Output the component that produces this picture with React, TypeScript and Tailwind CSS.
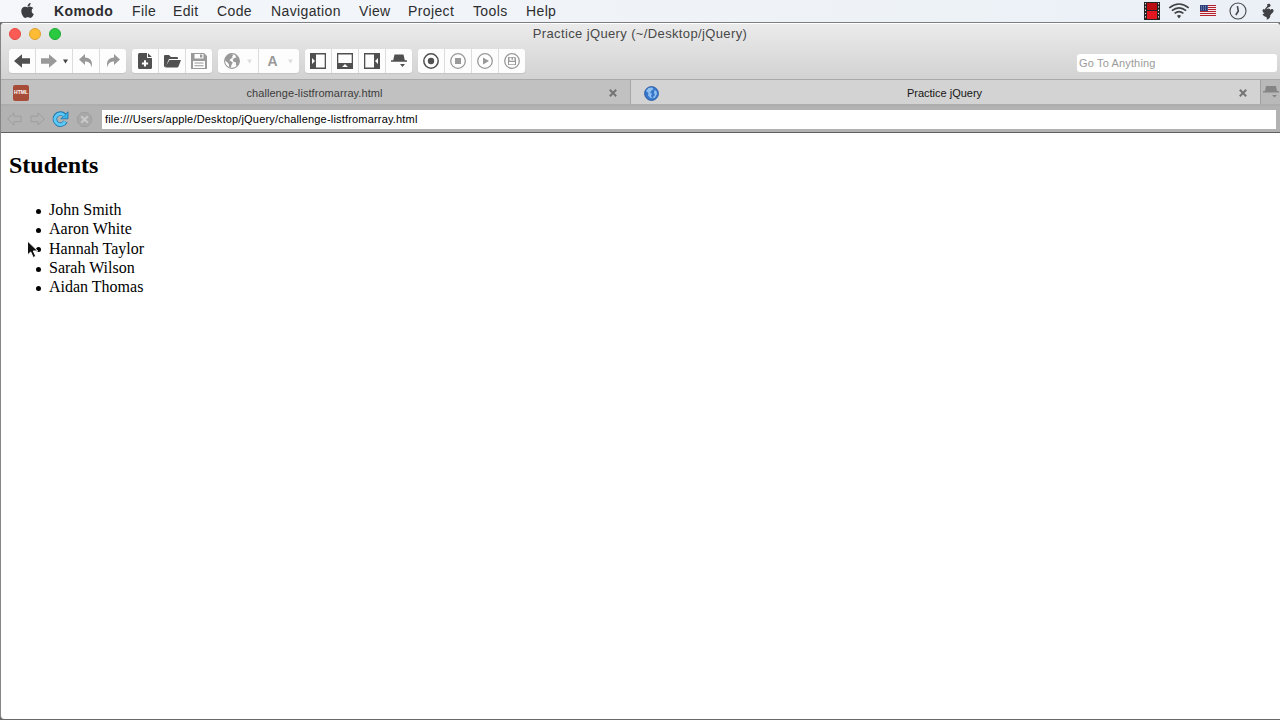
import type { ReactNode } from "react";
import { FaApple } from "react-icons/fa";

const menus = [
  { label: "File", className: "w-[41px]" },
  { label: "Edit", className: "w-[44px]" },
  { label: "Code", className: "w-[54px]" },
  { label: "Navigation", className: "w-[88px]" },
  { label: "View", className: "w-[49px]" },
  { label: "Project", className: "w-[65px]" },
  { label: "Tools", className: "w-[53px]" },
  { label: "Help", className: "w-[40px]" },
];

const students = [
  "John Smith",
  "Aaron White",
  "Hannah Taylor",
  "Sarah Wilson",
  "Aidan Thomas",
];

function Group({ children }: { children: ReactNode }) {
  return (
    <div className="flex h-6 divide-x divide-[#dcdcdc] overflow-hidden rounded-[3px] bg-[#fdfdfd] shadow-[0_1px_1px_rgba(0,0,0,0.08)]">
      {children}
    </div>
  );
}

function Tool({ children, className = "w-[27px]", color = "text-[#505050]" }: { children: ReactNode; className?: string; color?: string }) {
  return (
    <button className={`flex h-6 shrink-0 items-center justify-center ${className} ${color}`}>
      {children}
    </button>
  );
}

function Icon({ children, width = 16 }: { children: ReactNode; width?: number }) {
  return (
    <svg width={width} height="16" viewBox={`0 0 ${width} 16`} fill="currentColor" className="shrink-0">
      {children}
    </svg>
  );
}

function MenuBar() {
  return (
    <header className="flex h-[23px] items-center border-b border-[#7c7e82] bg-linear-to-r from-[#f5f7fa] to-[#eaf0f6] text-[14px] tracking-[0.37px] text-[#2c2d2f]">
      <FaApple className="mb-[2px] ml-[20px] h-[17px] w-[15px] shrink-0 text-[#3c3e41]" />
      <span className="ml-[19px] w-[78px] font-bold tracking-[0.4px]">Komodo</span>
      <nav className="flex">
        {menus.map((m) => (
          <span key={m.label} className={m.className}>
            {m.label}
          </span>
        ))}
      </nav>
      <div className="ml-auto flex shrink-0 items-center">
        {/* film strip */}
        <svg width="16" height="18" viewBox="0 0 16 18" className="mr-[8px]">
          <path fill="#252222" d="M0 0h16v18H0z" />
          <path fill="#b90d12" d="M3 1h10v7H3z" />
          <path fill="#e3171f" d="M3 9h10v8H3z" />
          <path stroke="#f3e7e8" strokeDasharray="1.3 2" d="M1.5 1v16M14.5 1v16" />
        </svg>
        {/* wifi */}
        <svg width="22" height="16" viewBox="0 0 22 16" fill="none" stroke="#3f4144" strokeWidth="1.6" className="mr-[10px]">
          <path d="M1.300 4.800q9.700-7.500 19.400 0M3.900 7.700q7.100-5.600 14.200 0M6.600 10.400q4.400-3.500 8.800 0" />
          <path fill="#3f4144" stroke="none" d="M8.900 12.800q2.100-1.500 4.200 0L11 15.400z" />
        </svg>
        {/* flag */}
        <svg width="16" height="11" viewBox="0 0 16 11" className="mr-[13px] mb-[2px]">
          <path fill="#f3e9ec" d="M0 0h16v11H0z" />
          <path fill="#b3202e" d="M0 0h16v1H0zM0 2h16v1H0zM0 4h16v1H0zM0 6h16v1H0zM0 8h16v1H0zM0 10h16v1H0z" />
          <path fill="#293b79" d="M0 0h8v6H0z" />
          <path stroke="#ccd2e8" strokeDasharray="0.8 1.2" strokeWidth="0.7" d="M1 1.300h6.500M1 3h6.500M1 4.700h6.500" />
        </svg>
        {/* clock */}
        <svg width="18" height="18" viewBox="0 0 18 18" fill="none" stroke="#45474a" strokeWidth="1.100" className="mr-[15px]">
          <circle cx="9" cy="9" r="8" />
          <path strokeWidth="1.600" d="M8.400 4.200L9.300 9 6.800 13" />
        </svg>
        {/* ornament */}
        <svg width="12" height="17" viewBox="0 0 12 17" fill="#3f4144" className="mr-[6px]">
          <path d="M5 1.500C6.500 0 9 .8 8.500 2.800 8 4.400 5.500 4 4.600 6.200c2-1.200 3.400-.4 3.600.8 1-1.600 3.200-1.300 3.400.6.2 2-2.200 3-3.400 4.700.5 1.900-1.200 3.900-3.600 4.300 0-1 .5-1.400.2-2.200C3.500 13.500 1 13.200.4 11c1 0 1.700-.2 2-1C1 9.500 0 8 .9 6.600c.7-1 1.600-.7 2 .1C2.800 4.500 6.500 3.500 5 1.500z" />
        </svg>
      </div>
    </header>
  );
}

function Toolbar() {
  return (
    <div className="flex h-[33px] items-start pt-[3px] pr-[3px] pl-[8px]">
      <Group>
        <Tool className="w-[27px]">
          <Icon><path d="M0 8l8-6.700v4h8v5.400H8v4z" /></Icon>
        </Tool>
        <Tool className="w-[37px] gap-[6px]" color="text-[#999]">
          <Icon><path d="M16 8L8 1.300v4H0v5.400h8v4z" /></Icon>
          <svg width="5" height="5" viewBox="0 0 5 5"><path fill="#444" d="M0 .5h5l-2.500 4z" /></svg>
        </Tool>
        <Tool color="text-[#999]">
          <Icon><path d="M1 6.500L7 1v3.500c5 .2 8.500 3.500 6.300 10C13 10.500 11 8.700 7 8.600V12z" /></Icon>
        </Tool>
        <Tool className="w-[26px]" color="text-[#999]">
          <Icon><path d="M15 6.500L9 1v3.500c-5 .2-8.500 3.500-6.300 10C3 10.500 5 8.700 9 8.600V12z" /></Icon>
        </Tool>
      </Group>
      <div className="w-[6px]" />
      <Group>
        <Tool>
          <Icon>
            <path d="M1 1.500Q1 0 2.500 0H10v5h5v9.500q0 1.500-1.500 1.500h-11Q1 16 1 14.500zM11 .3L14.800 4H11z" />
            <path stroke="#fff" strokeWidth="2" d="M8 7.300v6.200M4.900 10.400h6.200" />
          </Icon>
        </Tool>
        <Tool>
          <Icon width={17}>
            <path d="M0 14V3q0-1 1-1h4l2 2h6q1 0 1 1v1H5L2 13zM5.500 7H17l-2.500 6.500q-.3 1-1.500 1H1z" />
          </Icon>
        </Tool>
        <Tool className="w-[26px]" color="text-[#999]">
          <Icon>
            <path fillRule="evenodd" d="M0 0h13l3 3v13H0zM3.500 1v4.500h9V1zM2 8v7h12V8z" />
            <path d="M9 1.500h2.300v3H9zM3.500 9.500h9v1h-9zM3.500 12.300h9v1h-9z" />
          </Icon>
        </Tool>
      </Group>
      <div className="w-[6px]" />
      <Group>
        <Tool className="w-[41px] gap-[7px]" color="text-[#999]">
          <Icon>
            <circle cx="8" cy="8" r="7.400" fill="none" stroke="currentColor" strokeWidth="1.100" />
            <path d="M1.500 5L4 2l3-1.300L9.500 2 8 3.200l.8 1.300L6.500 6 5.300 7.200 7 8.300l1.800 1.200L7.500 12l-.8 2.700-1.500-1L4.800 11 3 9 1 7.500zM11 2l3 2 1.500 4-1 3.500-1.700 1.500-1-1.200.3-2.300-2.600-.7-.8-2.300L10.500 5l1.800-.5z" />
          </Icon>
          <svg width="5" height="5" viewBox="0 0 5 5"><path fill="#ddd" d="M0 .5h5l-2.500 4z" /></svg>
        </Tool>
        <Tool className="w-[40px] gap-[10px] pl-[2px]" color="text-[#999]">
          <span className="text-[14px] leading-none font-bold">A</span>
          <svg width="5" height="5" viewBox="0 0 5 5"><path fill="#ddd" d="M0 .5h5l-2.500 4z" /></svg>
        </Tool>
      </Group>
      <div className="w-[6px]" />
      <Group>
        <Tool>
          <Icon><path fillRule="evenodd" d="M0 0h16v16H0zM6 1.500v13h8.700v-13zM2 5v6l3-3z" /></Icon>
        </Tool>
        <Tool>
          <Icon><path fillRule="evenodd" d="M0 0h16v16H0zM1.300 1.500v8.500h13.400V1.500zM5 14h6l-3-3z" /></Icon>
        </Tool>
        <Tool>
          <Icon><path fillRule="evenodd" d="M0 0h16v16H0zM1.300 1.500v13H10v-13zM14 5v6l-3-3z" /></Icon>
        </Tool>
        <Tool className="w-[26px]">
          <Icon><path d="M3.500 1.500h9l1.300 5.700H16v1.600H0V7.200h2.200zM9 11h5l-2.500 3z" /></Icon>
        </Tool>
      </Group>
      <div className="w-[6px]" />
      <Group>
        <Tool>
          <Icon>
            <circle cx="8" cy="8" r="7.200" fill="none" stroke="currentColor" strokeWidth="1.500" />
            <circle cx="8" cy="8" r="3.200" />
          </Icon>
        </Tool>
        <Tool color="text-[#999]">
          <Icon>
            <circle cx="8" cy="8" r="7.300" fill="none" stroke="currentColor" strokeWidth="1.300" />
            <path d="M5 5h6v6H5z" />
          </Icon>
        </Tool>
        <Tool color="text-[#999]">
          <Icon>
            <circle cx="8" cy="8" r="7.300" fill="none" stroke="currentColor" strokeWidth="1.300" />
            <path d="M6 4.500L12 8l-6 3.500z" />
          </Icon>
        </Tool>
        <Tool className="w-[26px]" color="text-[#999]">
          <Icon>
            <circle cx="8" cy="8" r="7.300" fill="none" stroke="currentColor" strokeWidth="1.300" />
            <path fillRule="evenodd" d="M4 4h7l1 1v7H4zM5.500 4.800v3h5v-3zM5 9v2.200h6V9z" />
            <path d="M7.500 4.500H9v2.300H7.500z" />
          </Icon>
        </Tool>
      </Group>
      <div className="mt-[5px] ml-auto flex h-[18px] w-[200px] items-center rounded-[3px] bg-white pl-[2px] text-[11px] tracking-[0.15px] text-[#9a9a9a]">
        Go To Anything
      </div>
    </div>
  );
}

function CloseIcon() {
  return (
    <svg width="8" height="8" viewBox="0 0 8 8" stroke="#747474" strokeWidth="2" className="mt-[2px]">
      <path d="M.8.800l6.400 6.400M7.200.800L.8 7.200" />
    </svg>
  );
}

function Tabs() {
  return (
    <div className="flex h-[27px] border-t border-[#aaa] border-b-2 border-b-[#adadad] text-[11px] text-[#3c3c3c]">
      <div className="flex w-[630px] items-center border-r border-[#a6a6a6] bg-[#c1c1c1] pr-[13px] pl-[12px]">
        <span className="mt-[2px] flex h-4 w-4 items-center justify-center rounded-[2px] bg-[#a84c3a] text-[5px] font-bold text-white">HTML</span>
        <span className="flex-1 pt-[2px] pr-[9px] text-center tracking-[0.06px]">challenge-listfromarray.html</span>
        <CloseIcon />
      </div>
      <div className="flex w-[629px] items-center bg-[#d3d3d3] pr-[13px] pl-[13px]">
        <svg width="15" height="15" viewBox="0 0 15 15" className="mt-[2px]">
          <circle cx="7.500" cy="7.500" r="6.900" fill="#3677cb" stroke="#315fa9" />
          <path fill="#8fc0f0" d="M2 5l2.500-3L8 1.500 9.500 3 7.500 4.500 6 7l2 .5L7 10l1.500 2.500L6.500 12 4 9.500 4.500 7zM10.500 4l2 1 .5 3-2 3.500-1.500 1-.5-1.500L11 9l-1-2z" />
        </svg>
        <span className="flex-1 pt-[2px] pr-[9px] text-center text-[#151515]">Practice jQuery</span>
        <CloseIcon />
      </div>
      <div className="flex flex-1 items-center justify-center border-l border-[#a0a0a0] bg-[#b9b9b9]">
        <svg width="16" height="14" viewBox="0 0 16 14" fill="#858585">
          <path d="M3 1h10l1 5h2v1.500H0V6h2zM9 10h5l-2.500 2.500z" />
        </svg>
      </div>
    </div>
  );
}

function AddressBar() {
  return (
    <div className="flex h-[27px] items-center border-b border-[#606060] bg-[#b2b2b2] pr-[4px] pl-[6px]">
      <svg width="15" height="14" viewBox="0 0 15 14" fill="#b2b2b2" stroke="#9d9d9d">
        <path d="M.7 7L7 .8v3.400h7v5.600H7v3.400z" />
      </svg>
      <svg width="15" height="14" viewBox="0 0 15 14" fill="#b2b2b2" stroke="#9d9d9d" className="ml-[8px]">
        <path d="M14.300 7L8 .8v3.400H1v5.600h7v3.400z" />
      </svg>
      <svg width="17" height="17" viewBox="0 0 17 17" fill="none" className="ml-[7px]">
        <path stroke="#1b72a8" strokeWidth="4.500" d="M13.500 10.500a5.600 5.600 0 1 1-1-6.300" />
        <path fill="#37b0e8" stroke="#1b72a8" strokeWidth=".8" d="M16 .8v7H8.800z" />
        <path stroke="#5bc8f5" strokeWidth="3" d="M13.200 10.500a5.400 5.400 0 1 1-1-6" />
      </svg>
      <svg width="15" height="15" viewBox="0 0 15 15" className="ml-[8px]">
        <path fill="#a8a8a8" stroke="#a0a0a0" d="M4.500.5h6l4 4v6l-4 4h-6l-4-4v-6z" />
        <path stroke="#c8c8c8" strokeWidth="2.200" d="M4.200 4.200l6.600 6.600M10.800 4.200l-6.600 6.600" />
      </svg>
      <div className="ml-[10px] flex h-[19px] flex-1 items-center bg-white pl-[3px] text-[11px] tracking-[0.18px] text-black">
        file:///Users/apple/Desktop/jQuery/challenge-listfromarray.html
      </div>
    </div>
  );
}

export default function App() {
  return (
    <div className="relative flex h-[720px] w-[1280px] flex-col overflow-hidden bg-[#686868] font-['Liberation_Sans',Arial,sans-serif]">
      <MenuBar />
      <div className="flex h-[696px] flex-col overflow-hidden rounded-t-[4px] rounded-bl-[4px] border-l border-[#858585] bg-white">
        <div className="h-[56px] shrink-0 border-t border-white bg-linear-to-b from-[#ebebeb] to-[#d2d2d2]">
          <div className="flex h-[22px] items-center pb-[2px]">
            <div className="flex w-[200px] gap-[8px] pl-[8px]">
              <span className="h-3 w-3 rounded-full border border-[#e24b42] bg-[#fc5b55]" />
              <span className="h-3 w-3 rounded-full border border-[#dea032] bg-[#fdbc34]" />
              <span className="h-3 w-3 rounded-full border border-[#20a936] bg-[#29c940]" />
            </div>
            <h1 className="flex-1 text-center text-[13px] tracking-[0.37px] text-[#484848]">Practice jQuery (~/Desktop/jQuery)</h1>
            <div className="w-[201px]" />
          </div>
          <Toolbar />
        </div>
        <Tabs />
        <AddressBar />
        <main className="flex-1 pt-[18px] pl-[8px] font-['Liberation_Serif','Times_New_Roman',serif] text-black">
          <h2 className="text-[24px] leading-[28px] font-bold">Students</h2>
          <ul className="mt-[21px] pl-[27px] text-[16px] leading-[19.3px]">
            {students.map((name) => (
              <li key={name} className="flex items-center gap-[8px]">
                <span className="mt-[3px] h-[5px] w-[5px] rounded-full bg-black" />
                {name}
              </li>
            ))}
          </ul>
        </main>
      </div>
      {/* mouse pointer */}
      <svg width="14" height="20" viewBox="0 0 14 20" className="absolute top-[240px] left-[26px]">
        <path fill="#111" stroke="#fff" d="M1.500 1v14l3.200-3 2.500 5.500 2.600-1.200L7.300 11h4.500z" />
      </svg>
    </div>
  );
}
